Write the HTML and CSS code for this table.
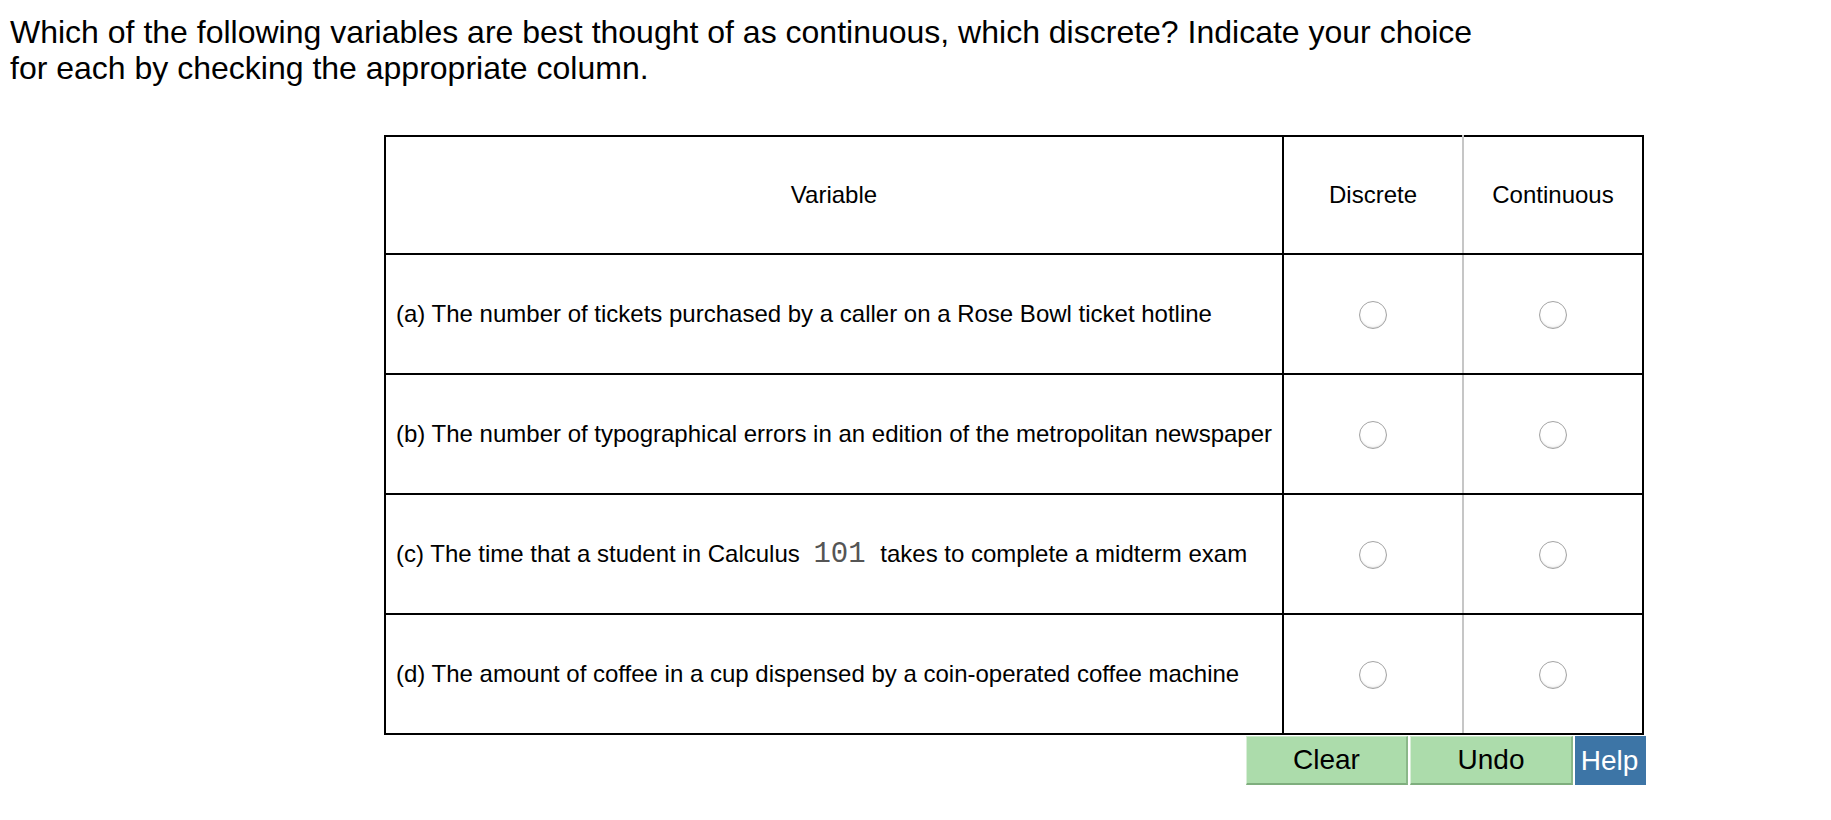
FILE: index.html
```html
<!DOCTYPE html>
<html>
<head>
<meta charset="utf-8">
<link rel="stylesheet" href="styles.css">
</head>
<body>
<div class="page">
  <p class="question">Which of the following variables are best thought of as continuous, which discrete? Indicate your choice<br>for each by checking the appropriate column.</p>
  <div class="widget">
    <table class="grid">
      <thead>
        <tr>
          <th class="col-var">Variable</th>
          <th class="col-opt">Discrete</th>
          <th class="col-opt col-last">Continuous</th>
        </tr>
      </thead>
      <tbody>
        <tr>
          <td class="col-var text">(a) The number of tickets purchased by a caller on a Rose Bowl ticket hotline</td>
          <td class="col-opt"><span class="radio"></span></td>
          <td class="col-opt col-last"><span class="radio"></span></td>
        </tr>
        <tr>
          <td class="col-var text">(b) The number of typographical errors in an edition of the metropolitan newspaper</td>
          <td class="col-opt"><span class="radio"></span></td>
          <td class="col-opt col-last"><span class="radio"></span></td>
        </tr>
        <tr>
          <td class="col-var text">(c) The time that a student in Calculus <span class="math">101</span> takes to complete a midterm exam</td>
          <td class="col-opt"><span class="radio"></span></td>
          <td class="col-opt col-last"><span class="radio"></span></td>
        </tr>
        <tr>
          <td class="col-var text">(d) The amount of coffee in a cup dispensed by a coin-operated coffee machine</td>
          <td class="col-opt"><span class="radio"></span></td>
          <td class="col-opt col-last"><span class="radio"></span></td>
        </tr>
      </tbody>
    </table>
    <div class="actions">
      <button class="btn btn-green btn-clear">Clear</button>
      <button class="btn btn-green btn-undo">Undo</button>
      <button class="btn btn-help">Help</button>
    </div>
  </div>
</div>
</body>
</html>
```

FILE: styles.css
```css
html, body {
  margin: 0;
  padding: 0;
  background: #fff;
}
body {
  font-family: "Liberation Sans", Arial, Helvetica, sans-serif;
  color: #000;
}
.page {
  padding: 14px 10px 0 10px;
}
.question {
  margin: 0;
  font-size: 32px;
  line-height: 36px;
}
.widget {
  margin-top: 49px;
  margin-left: 374px;
  width: 1262px;
}
.grid {
  border-collapse: collapse;
  width: 1260px;
  border: 2px solid #000;
  table-layout: fixed;
}
.grid th, .grid td {
  border: 2px solid #000;
  padding: 0;
  font-size: 24px;
  font-weight: normal;
}
.grid th {
  height: 116px;
  text-align: center;
}
.grid td {
  height: 118px;
}
.grid .col-var {
  width: 896px;
}
.grid .col-opt {
  width: 178px;
  text-align: center;
}
.grid th.col-opt:not(.col-last), .grid td.col-opt:not(.col-last) {
  border-right: 2px solid #c6c6c6;
}
.grid .col-last {
  border-left: 2px solid #c6c6c6;
}
.grid td.text {
  padding-left: 10px;
  text-align: left;
  white-space: nowrap;
}
.math {
  font-family: "Liberation Mono", "Courier New", monospace;
  font-size: 29px;
  color: #555;
  margin: 0 8px 0 7px;
}
.radio {
  display: inline-block;
  width: 26px;
  height: 26px;
  border-radius: 50%;
  border: 1px solid #a4a4a4;
  background: radial-gradient(circle at 50% 40%, #ffffff 55%, #f0f0f0 100%);
  box-shadow: inset 0 -1px 1px rgba(0,0,0,0.1);
  vertical-align: middle;
}
.actions {
  display: flex;
  justify-content: flex-end;
  gap: 2px;
  margin-top: 1px;
}
.btn {
  height: 49px;
  font-family: "Liberation Sans", Arial, Helvetica, sans-serif;
  font-size: 28px;
  padding: 0;
  margin: 0;
  cursor: pointer;
}
.btn-green {
  width: 162px;
  background: #acdcab;
  color: #000;
  border: 1px solid #8fbf8e;
  border-top-color: #c9eac8;
  border-left-color: #d9eed8;
  border-right: 2px solid #8ab889;
  border-bottom: 2px solid #7fae7e;
}
.btn-undo {
  width: 163px;
}
.btn-help {
  width: 71px;
  padding-right: 2px;
  background: #3d75a6;
  color: #fff;
  border: none;
}
```
